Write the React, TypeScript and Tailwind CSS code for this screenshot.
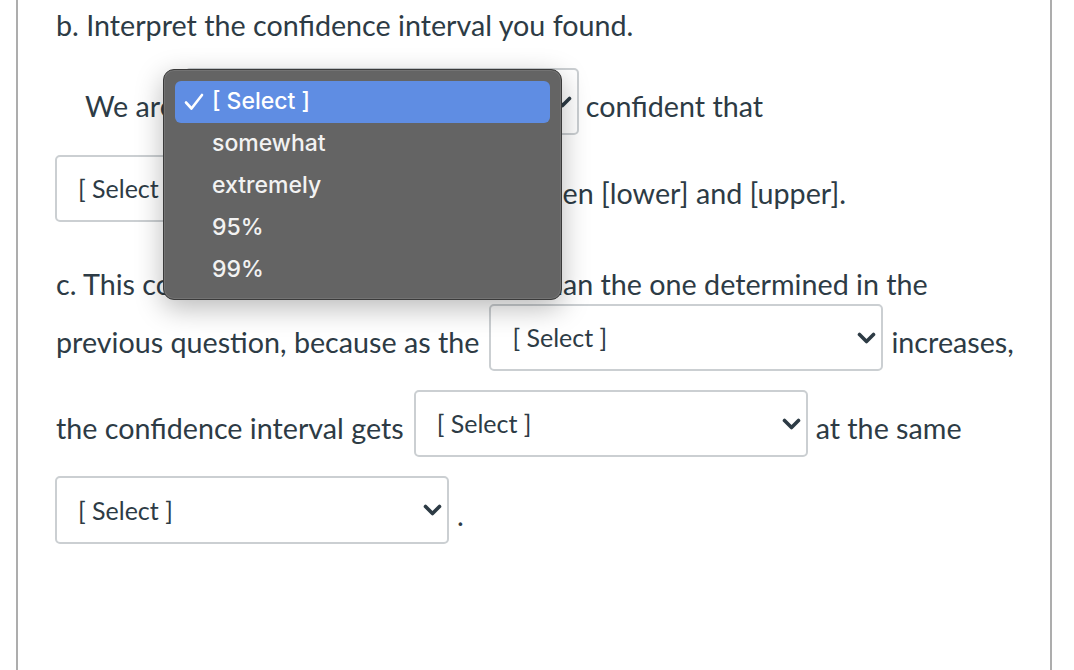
const ink = "text-[#2d3b45]";

function Chevron() {
  return (
    <svg width="19" height="12" viewBox="0 0 19 12" className="shrink-0">
      <path
        d="M2.5 2.5l7 7 7-7"
        fill="none"
        stroke="#2d3b45"
        strokeWidth="3.6"
        strokeLinecap="round"
        strokeLinejoin="round"
      />
    </svg>
  );
}

function Select({ className = "" }: { className?: string }) {
  return (
    <div
      className={`flex h-[67px] w-[394px] shrink-0 items-center justify-between rounded-[5px] border-2 border-[#cbcfd2] bg-white pl-[21px] pr-[5px] ${className}`}
    >
      <span className="text-[25px] leading-none">[ Select ]</span>
      <Chevron />
    </div>
  );
}

function Txt({ children, className = "" }: { children: React.ReactNode; className?: string }) {
  return <span className={`mt-[10px] whitespace-pre leading-[39px] ${className}`}>{children}</span>;
}

const options = ["[ Select ]", "somewhat", "extremely", "95%", "99%"];

function Popup() {
  return (
    <div className="absolute left-[145px] top-[69px] h-[231px] w-[399px] rounded-[11px] border border-[#3a3a3a] bg-[#646464] px-[11px] pt-[11px] shadow-[inset_0_0_0_1px_rgba(255,255,255,0.1),0_8px_28px_rgba(0,0,0,0.28)] [font-family:Inter,'Noto_Sans',sans-serif]">
      {options.map((o, i) => (
        <div
          key={o}
          className={`relative flex h-[42px] items-center pl-[37px] text-[23px] font-medium text-[#f2f2f2] ${
            i === 0 ? "rounded-[6px] bg-[#5f8de3] text-white" : ""
          }`}
        >
          {i === 0 && (
            <svg width="22" height="20" viewBox="0 0 22 20" className="absolute left-[8px] top-[11px]">
              <path d="M3 10.5l5.5 6L19 3" fill="none" stroke="#fff" strokeWidth="2.6" strokeLinecap="round" strokeLinejoin="round" />
            </svg>
          )}
          <span className="pb-[1px]">{o}</span>
        </div>
      ))}
    </div>
  );
}

export default function App() {
  return (
    <div className={`min-h-[670px] bg-white pl-4 ${ink} [font-family:Lato,'Liberation_Sans',sans-serif] text-[28.7px]`}>
      <div className="relative min-h-[670px] w-[1036px] border-x-2 border-[#adadad] pl-[38px] pt-[6px]">
        <div className="leading-[39px]">b. Interpret the confidence interval you found.</div>

        <div className="mt-[23px] flex h-[67px] items-center pl-[29px]">
          <Txt>We are</Txt>
          <Select className="ml-[10px]" />
          <Txt className="ml-[7px]">confident that</Txt>
        </div>

        <div className="mt-[20px] flex h-[67px] items-center">
          <Select className="-ml-px" />
          <Txt className="ml-[8px]">is between [lower] and [upper].</Txt>
        </div>

        <div className="mt-[43px] leading-[39px]">c. This confidence interval is narrower than the one determined in the</div>

        <div className="flex h-[67px] items-center">
          <Txt>previous question, because as the</Txt>
          <Select className="ml-[10px]" />
          <Txt className="ml-[8px]">increases,</Txt>
        </div>

        <div className="mt-[19px] flex h-[67px] items-center">
          <Txt>the confidence interval gets</Txt>
          <Select className="ml-[10px]" />
          <Txt className="ml-[8px]">at the same</Txt>
        </div>

        <div className="mt-[19px] flex h-[68px] items-center">
          <Select className="-ml-px h-[68px]" />
          <Txt className="ml-[8px]">.</Txt>
        </div>

        <Popup />
      </div>
    </div>
  );
}
